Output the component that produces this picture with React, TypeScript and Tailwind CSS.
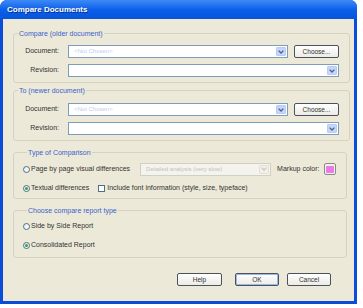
import React from 'react';

const ui = "font-['Liberation_Sans',Arial,sans-serif]";

function DropArrow({ disabled = false }: { disabled?: boolean }) {
	return (
		<div
			className={`flex w-[10px] items-center justify-center rounded-[1px] border ${
				disabled ? 'border-[#e3e1d6] bg-[#f2f0e8]' : 'border-[#b9cbf6] bg-[#c5d6fc]'
			}`}
		>
			<svg width="6" height="4" viewBox="0 0 6 4">
				<path
					d="M0.6 0.6 L3 3 L5.4 0.6"
					stroke={disabled ? '#c9c7bc' : '#4d6185'}
					strokeWidth="1.3"
					fill="none"
				/>
			</svg>
		</div>
	);
}

function Combo({
	placeholder,
	className = '',
	disabled = false,
}: {
	placeholder?: string;
	className?: string;
	disabled?: boolean;
}) {
	return (
		<div
			className={`flex h-[13px] items-stretch border p-[1px] ${
				disabled ? 'border-[#d2d0c5] bg-[#f4f3ee]' : 'border-[#7f9db9] bg-white'
			} ${className}`}
		>
			<div
				className={`flex flex-1 items-center pl-[4px] text-[6px] ${
					disabled ? 'text-[#c4c2b8]' : 'text-[#c3ccec]'
				}`}
			>
				{placeholder}
			</div>
			<DropArrow disabled={disabled} />
		</div>
	);
}

function XpButton({ label, className = '', isDefault = false }: { label: string; className?: string; isDefault?: boolean }) {
	return (
		<div
			className={`flex h-[13px] items-center justify-center rounded-[2px] border border-[#4a5260] bg-gradient-to-b from-white to-[#ecebe4] text-[6.5px] text-[#333] ${
				isDefault ? 'shadow-[inset_0_0_0_1px_#9ab8ef]' : ''
			} ${className}`}
		>
			{label}
		</div>
	);
}

function Radio({ label, checked = false }: { label: string; checked?: boolean }) {
	return (
		<div className="flex items-center gap-[1px]">
			<div className="flex h-[7px] w-[7px] items-center justify-center rounded-full border border-[#4a6f94] bg-gradient-to-br from-[#e8e8e2] to-white">
				{checked && <div className="h-[3px] w-[3px] rounded-full bg-[#3aa33a]" />}
			</div>
			<span className="text-[7px] text-[#333]">{label}</span>
		</div>
	);
}

function Group({ title, className = '', children }: { title: string; className?: string; children: React.ReactNode }) {
	return (
		<fieldset className={`rounded-[3px] border border-[#d5d2c2] ${className}`}>
			<legend className="ml-[4px] px-[1px] text-[7px] leading-[9px] text-[#3a62cc]">{title}</legend>
			{children}
		</fieldset>
	);
}

function DocRows() {
	return (
		<div className="flex flex-col gap-[6px] pl-[1px] pr-[10px]">
			<div className="flex items-center">
				<span className="w-[44px] text-right text-[7px] text-[#333]">Document:</span>
				<Combo placeholder="<Not Chosen>" className="ml-[9px] w-[220px]" />
				<XpButton label="Choose..." className="ml-[6px] w-[45px]" />
			</div>
			<div className="flex items-center">
				<span className="w-[44px] text-right text-[7px] text-[#333]">Revision:</span>
				<Combo className="ml-[9px] flex-1" />
			</div>
		</div>
	);
}

export default function App() {
	return (
		<div className={`h-[308px] w-[363px] overflow-hidden bg-white ${ui}`}>
			<div className="flex h-[304px] w-[357px] flex-col overflow-hidden rounded-t-[7px] bg-[#0b4dd8]">
				{/* title bar */}
				<div className="flex h-[19px] items-center bg-gradient-to-b from-[#3d8af5] via-[#0b5fe9] to-[#0654dc] pl-[7px]">
					<span className="text-[8px] font-bold text-white [text-shadow:1px_1px_0_#0a2f8a]">Compare Documents</span>
				</div>

				{/* body */}
				<div className="mx-[3px] mb-[3px] flex flex-1 flex-col bg-[#ece9d8] pl-[10px] pr-[7px]">
					<Group title="Compare (older document)" className="mt-[10px] pb-[5px] pt-[7px]">
						<DocRows />
					</Group>

					<Group title="To (newer document)" className="mt-[3px] pb-[5px] pt-[8px]">
						<DocRows />
					</Group>

					<Group title="Type of Comparison" className="mt-[7px] pb-[4px] pl-[9px] pt-[6px]">
						<div className="flex flex-col gap-[7px]">
							<div className="flex h-[12px] items-center">
								<Radio label="Page by page visual differences" />
								<Combo
									disabled
									placeholder="Detailed analysis (very slow)"
									className="ml-[10px] h-[12px] w-[131px]"
								/>
								<span className="ml-[6px] text-[7px] text-[#333]">Markup color:</span>
								<div className="ml-[4px] flex h-[12px] w-[12px] items-center justify-center rounded-[2px] border border-[#8a8a86] bg-[#f3f1ea]">
									<div className="h-[7px] w-[8px] rounded-[1px] bg-[#ee7aea]" />
								</div>
							</div>
							<div className="flex h-[12px] items-center">
								<Radio label="Textual differences" checked />
								<div className="ml-[9px] flex items-center gap-[2px]">
									<div className="h-[7px] w-[7px] border border-[#4a6f94] bg-white" />
									<span className="text-[7px] text-[#333]">Include font information (style, size, typeface)</span>
								</div>
							</div>
						</div>
					</Group>

					<Group title="Choose compare report type" className="mt-[7px] pb-[6px] pl-[9px] pt-[5px]">
						<div className="flex flex-col gap-[7px]">
							<div className="flex h-[12px] items-center">
								<Radio label="Side by Side Report" />
							</div>
							<div className="flex h-[12px] items-center">
								<Radio label="Consolidated Report" checked />
							</div>
						</div>
					</Group>

					<div className="mt-[15px] flex justify-end pr-[16px]">
						<XpButton label="Help" className="w-[45px]" />
						<XpButton label="OK" isDefault className="ml-[13px] w-[44px]" />
						<XpButton label="Cancel" className="ml-[8px] w-[44px]" />
					</div>
				</div>
			</div>
		</div>
	);
}
